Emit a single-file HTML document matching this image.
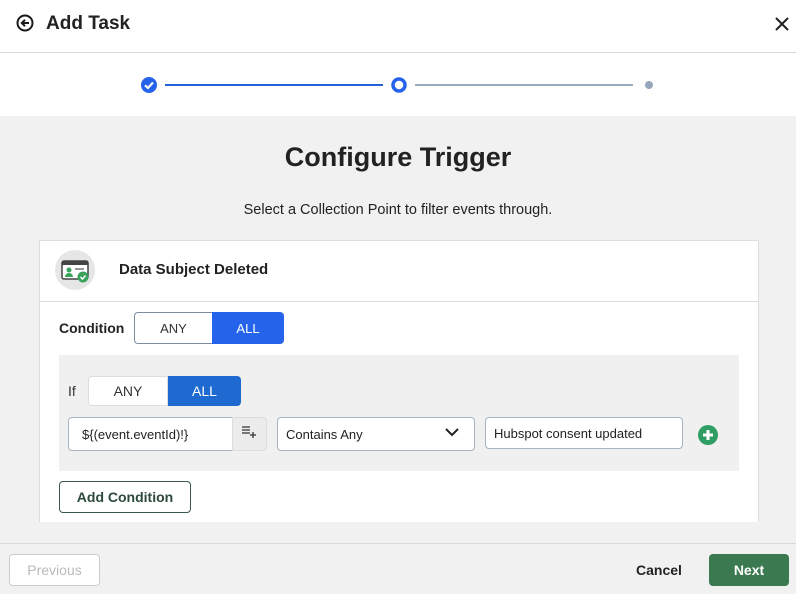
<!DOCTYPE html>
<html><head><meta charset="utf-8"><style>
*{box-sizing:border-box;margin:0;padding:0}
body{width:796px;height:594px;overflow:hidden;background:#f1f1f1;font-family:"Liberation Sans",sans-serif;position:relative;color:#1a1a1a}
.a{position:absolute}
.btn{position:absolute;display:flex;align-items:center;justify-content:center;font-size:14px}
</style></head><body>
<div class="a" style="left:0;top:0;width:796px;height:116px;background:#fff"></div>
<div class="a" style="left:0;top:52px;width:796px;height:1px;background:#d8d8d8"></div>
<svg class="a" style="left:16px;top:14px" width="18" height="18" viewBox="0 0 18 18"><circle cx="9" cy="9" r="7.5" fill="none" stroke="#1a1a1a" stroke-width="2"/><path d="M13 9H6M9 5.8L5.8 9 9 12.2" fill="none" stroke="#1a1a1a" stroke-width="2"/></svg>
<div class="a" style="left:46px;top:13px;font-size:19px;font-weight:bold;color:#222">Add Task</div>
<svg class="a" style="left:774px;top:16px" width="16" height="16" viewBox="0 0 16 16"><path d="M2 2L14 14M14 2L2 14" stroke="#222" stroke-width="2"/></svg>
<svg class="a" style="left:140px;top:76px" width="520" height="20"><circle cx="9" cy="9" r="8" fill="#2563eb"/><path d="M5 9.3L8 12 13 6.5" fill="none" stroke="#fff" stroke-width="2.2"/><line x1="25" y1="9" x2="243" y2="9" stroke="#2560d8" stroke-width="2"/><circle cx="259" cy="9" r="6" fill="#fff" stroke="#2563eb" stroke-width="3.5"/><line x1="275" y1="9" x2="493" y2="9" stroke="#9aa9bd" stroke-width="2"/><circle cx="509" cy="9" r="4" fill="#95a6bd"/></svg>
<div class="a" style="left:0;top:142px;width:796px;text-align:center;font-size:27px;font-weight:bold;color:#222">Configure Trigger</div>
<div class="a" style="left:0;top:202px;width:796px;text-align:center;font-size:14.5px;color:#222">Select a Collection Point to filter events through.</div>
<div class="a" style="left:39px;top:240px;width:720px;height:282px;background:#fff;border:1px solid #ddd;border-bottom:none"></div>
<div class="a" style="left:39px;top:301px;width:720px;height:1px;background:#ddd"></div>
<div class="a" style="left:55px;top:250px;width:40px;height:40px;border-radius:50%;background:#e6e6e6"></div>
<svg class="a" style="left:61px;top:260px" width="30" height="24"><rect x="1" y="1" width="26" height="18" rx="2" fill="#fff" stroke="#444" stroke-width="1.5"/><rect x="1" y="1" width="26" height="4" fill="#444"/><circle cx="8" cy="10" r="2.5" fill="#3aa35b"/><path d="M4 17a4 4 0 0 1 8 0z" fill="#3aa35b"/><line x1="14" y1="9" x2="23" y2="9" stroke="#777" stroke-width="1.5"/><circle cx="22" cy="17" r="5.5" fill="#3aa35b"/><path d="M19.5 17l2 2 3-3.5" fill="none" stroke="#fff" stroke-width="1.5"/></svg>
<div class="a" style="left:119px;top:261px;font-size:15px;font-weight:bold;color:#222">Data Subject Deleted</div>
<div class="a" style="left:59px;top:320px;font-size:14px;font-weight:bold;color:#222">Condition</div>
<div class="btn" style="left:134px;top:312px;width:78px;height:32px;border:1px solid #7e8ea2;border-right:none;border-radius:4px 0 0 4px;background:#fff;color:#333;font-size:13px">ANY</div>
<div class="btn" style="left:212px;top:312px;width:72px;height:32px;border-radius:0 4px 4px 0;background:#2563eb;color:#fff;font-size:13px">ALL</div>
<div class="a" style="left:59px;top:355px;width:680px;height:116px;background:#f0f0f0"></div>
<div class="a" style="left:68px;top:383px;font-size:14px;color:#333">If</div>
<div class="btn" style="left:88px;top:376px;width:80px;height:30px;background:#fff;border:1px solid #ddd;border-radius:4px 0 0 4px;color:#333">ANY</div>
<div class="btn" style="left:168px;top:376px;width:73px;height:30px;background:#1f6ad0;border-radius:0 4px 4px 0;color:#fff">ALL</div>
<div class="a" style="left:68px;top:417px;width:165px;height:34px;background:#fff;border:1px solid #a8b4c3;border-radius:4px 0 0 4px;font-size:13px;padding:9px 0 0 13px;color:#222">${(event.eventId)!}</div>
<div class="a" style="left:232px;top:417px;width:35px;height:34px;background:#ececec;border:1px solid #ddd;border-radius:0 4px 4px 0"></div>
<svg class="a" style="left:241px;top:425px" width="16" height="14"><path d="M1 2h8M1 5h8M1 8h8M9 10h6M12 7v6" stroke="#333" stroke-width="1.3"/></svg>
<div class="a" style="left:277px;top:417px;width:198px;height:34px;background:#fff;border:1px solid #a8b4c3;border-radius:4px;font-size:13px;padding:9px 0 0 8px;color:#222">Contains Any</div>
<svg class="a" style="left:444px;top:427px" width="16" height="12"><path d="M2 2l6 6 6-6" fill="none" stroke="#222" stroke-width="2"/></svg>
<div class="a" style="left:485px;top:417px;width:198px;height:32px;background:#fff;border:1px solid #a8b4c3;border-radius:4px;font-size:13px;padding:8px 0 0 8px;color:#222">Hubspot consent updated</div>
<svg class="a" style="left:697px;top:424px" width="22" height="22"><circle cx="11" cy="11" r="10" fill="#2f9e62"/><path d="M11 6v10M6 11h10" stroke="#fff" stroke-width="3"/></svg>
<div class="btn" style="left:59px;top:481px;width:132px;height:32px;border:1px solid #3a5a48;border-radius:4px;background:#fff;color:#2d4a3a;font-weight:bold">Add Condition</div>
<div class="a" style="left:0;top:543px;width:796px;height:1px;background:#d8d8d8"></div>
<div class="btn" style="left:9px;top:554px;width:91px;height:32px;border:1px solid #ccc;border-radius:4px;background:#fff;color:#bbb">Previous</div>
<div class="a" style="left:636px;top:562px;font-size:14px;font-weight:bold;color:#222">Cancel</div>
<div class="btn" style="left:709px;top:554px;width:80px;height:32px;border-radius:4px;background:#3b7a50;color:#fff;font-weight:bold">Next</div>
</body></html>
